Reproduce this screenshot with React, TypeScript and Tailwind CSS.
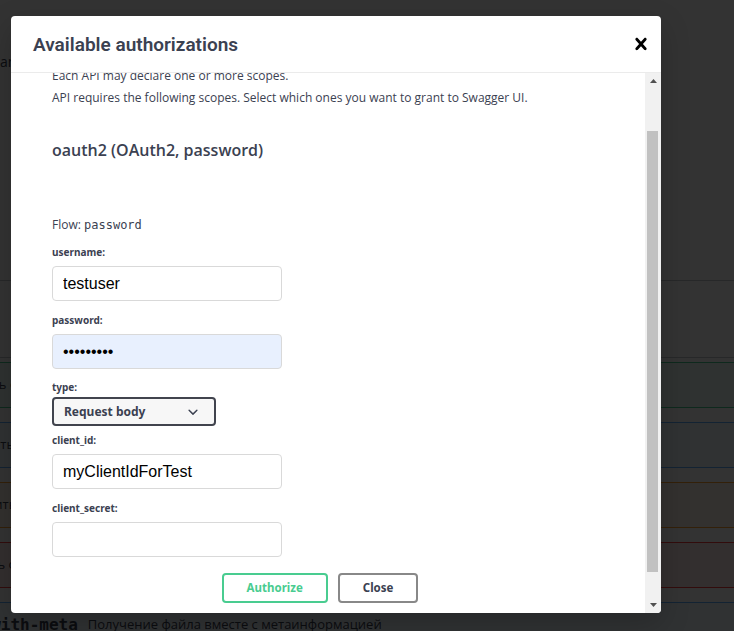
import type { ReactNode } from "react";

// Operations listed on the page behind the dialog
const operations = [
  {
    method: "POST",
    path: "/files/new",
    summary: "Загрузить файл на сервер",
    row: "border-[#49cc90] bg-[#49cc90]/10",
    badge: "bg-[#49cc90]",
  },
  {
    method: "GET",
    path: "/files/list",
    summary: "Получить список файлов",
    row: "border-[#61affe] bg-[#61affe]/10",
    badge: "bg-[#61affe]",
  },
  {
    method: "PUT",
    path: "/files/{id}",
    summary: "Обновить метаданные файла",
    row: "border-[#fca130] bg-[#fca130]/10",
    badge: "bg-[#fca130]",
  },
  {
    method: "DELETE",
    path: "/files/{id}",
    summary: "Удалить файл и все данные",
    row: "border-[#f93e3e] bg-[#f93e3e]/10",
    badge: "bg-[#f93e3e]",
  },
  {
    method: "GET",
    path: "/api/files/{id}/with-meta",
    summary: "Получение файла вместе с метаинформацией",
    row: "border-[#61affe] bg-[#61affe]/10",
    badge: "bg-[#61affe]",
  },
];

function FieldLabel({ children, className = "" }: { children: ReactNode; className?: string }) {
  return (
    <label
      className={`block font-['Noto_Sans',sans-serif] text-[10px] leading-[14px] font-bold text-[#3b4151] ${className}`}
    >
      {children}
    </label>
  );
}

function TextField({
  value,
  type = "text",
  className = "",
}: {
  value: string;
  type?: string;
  className?: string;
}) {
  return (
    <input
      readOnly
      type={type}
      value={value}
      className={`mt-[7px] block h-[35px] w-[230px] rounded-[4px] border border-[#d9d9d9] px-[10px] font-['Liberation_Sans',Arial,sans-serif] text-[16px] text-black outline-none ${className}`}
    />
  );
}

function Scrollbar() {
  return (
    <div className="flex w-[16px] flex-col bg-[#f1f1f1]">
      <div className="flex h-[16px] items-center justify-center">
        <svg width="7" height="4" viewBox="0 0 7 4">
          <path d="M0 4L3.5 0L7 4Z" fill="#505050" />
        </svg>
      </div>
      <div className="mt-[42px] ml-[2px] h-[441px] w-[11px] bg-[#c1c1c1]" />
      <div className="flex-1" />
      <div className="flex h-[16px] items-center justify-center">
        <svg width="7" height="4" viewBox="0 0 7 4">
          <path d="M0 0L7 0L3.5 4Z" fill="#505050" />
        </svg>
      </div>
    </div>
  );
}

function AuthDialog() {
  return (
    <div className="absolute top-[16px] left-[11px] w-[650px] overflow-hidden rounded-[4px] bg-white shadow-[0_10px_30px_rgba(0,0,0,0.2)]">
      <div className="flex h-[57px] items-center justify-between border-b border-[#ebebeb] pr-[8px] pl-[22px]">
        <h3 className="pt-[2px] font-['Roboto',sans-serif] text-[19px] font-semibold text-[#3b4151]">
          Available authorizations
        </h3>
        <svg width="24" height="24" viewBox="0 0 20 20">
          <path
            d="M14.348 14.849c-.469.469-1.229.469-1.697 0L10 11.819l-2.651 3.029c-.469.469-1.229.469-1.697 0-.469-.469-.469-1.229 0-1.697l2.758-3.15-2.759-3.152c-.469-.469-.469-1.228 0-1.697.469-.469 1.228-.469 1.697 0L10 8.183l2.651-3.031c.469-.469 1.228-.469 1.697 0 .469.469.469 1.229 0 1.697l-2.758 3.152 2.758 3.15c.469.469.469 1.229 0 1.698z"
            fill="#000"
          />
        </svg>
      </div>

      <div className="flex h-[540px]">
        <div className="flex-1 overflow-hidden pl-[41px]">
          <div className="-mt-[30px] font-['Open_Sans',sans-serif] text-[#3b4151]">
            <p className="text-[12px] leading-[22px]">
              Scopes are used to grant an application different levels of access to data on behalf of the end user.
              <br />
              Each API may declare one or more scopes.
            </p>
            <p className="text-[12px] leading-[22px]">
              API requires the following scopes. Select which ones you want to grant to Swagger UI.
            </p>

            <h4 className="mt-[29px] text-[16px] leading-[24px] font-semibold">oauth2 (OAuth2, password)</h4>

            <p className="mt-[54px] text-[12px] leading-[18px]">
              Flow: <code className="font-['DejaVu_Sans_Mono',monospace] text-[12px]">password</code>
            </p>

            <FieldLabel className="mt-[11px]">username:</FieldLabel>
            <TextField value="testuser" className="bg-white" />

            <FieldLabel className="mt-[12px]">password:</FieldLabel>
            <TextField type="password" value="secret123" className="bg-[#e8f0fe]" />

            <FieldLabel className="mt-[11px]">type:</FieldLabel>
            <div className="mt-[3px] flex h-[29px] w-[164px] items-center justify-between rounded-[4px] border-2 border-[#41444e] bg-[#f7f7f7] pr-[11px] pl-[10px]">
              <span className="font-['Noto_Sans',sans-serif] text-[12px] font-bold text-[#3b4151]">Request body</span>
              <svg width="20" height="20" viewBox="0 0 20 20">
                <path
                  d="M13.418 7.859a.695.695 0 01.978 0 .68.68 0 010 .969l-3.908 3.83a.697.697 0 01-.979 0l-3.908-3.83a.68.68 0 010-.969.695.695 0 01.978 0L10 11l3.418-3.141z"
                  fill="#3b4151"
                />
              </svg>
            </div>

            <FieldLabel className="mt-[7px]">client_id:</FieldLabel>
            <TextField value="myClientIdForTest" className="bg-white" />

            <FieldLabel className="mt-[12px]">client_secret:</FieldLabel>
            <TextField value="" className="bg-white" />

            <div className="mt-[16px] flex w-[536px] justify-center gap-[10px] font-['Noto_Sans',sans-serif]">
              <button className="h-[30px] rounded-[4px] border-2 border-[#49cc90] px-[23px] text-[11.5px] font-bold text-[#49cc90]">
                Authorize
              </button>
              <button className="h-[30px] rounded-[4px] border-2 border-[#888888] px-[23px] text-[11.5px] font-bold text-[#3b4151]">
                Close
              </button>
            </div>
          </div>
        </div>
        <Scrollbar />
      </div>
    </div>
  );
}

export default function App() {
  return (
    <div className="relative h-[631px] w-[734px] overflow-hidden bg-white font-['Open_Sans',sans-serif] text-[#3b4151]">
      {/* page underneath */}
      <div className="pt-[52px]">
        <p className="text-[14px] leading-[20px]">an API для хранения и получения файлов</p>
        <div className="h-[209px] border-b border-[#3b4151]/30" />
        <div className="flex h-[77px] items-center border-b border-[#3b4151]/30 pl-[20px] text-[24px] font-bold">
          files
        </div>
        <div className="mt-[4px]">
          {operations.map((op, i) => (
            <div
              key={i}
              className={`-ml-[259px] mb-[14px] flex h-[46px] w-[1100px] items-center rounded-[4px] border px-[5px] ${op.row}`}
            >
              <span
                className={`w-[80px] rounded-[3px] py-[6px] text-center text-[14px] font-bold text-white ${op.badge}`}
              >
                {op.method}
              </span>
              <span className="px-[10px] font-['DejaVu_Sans_Mono',monospace] text-[16px] font-bold">{op.path}</span>
              <span className="text-[13px]">{op.summary}</span>
            </div>
          ))}
        </div>
      </div>

      <div className="absolute inset-0 bg-black/80" />
      <AuthDialog />
    </div>
  );
}
